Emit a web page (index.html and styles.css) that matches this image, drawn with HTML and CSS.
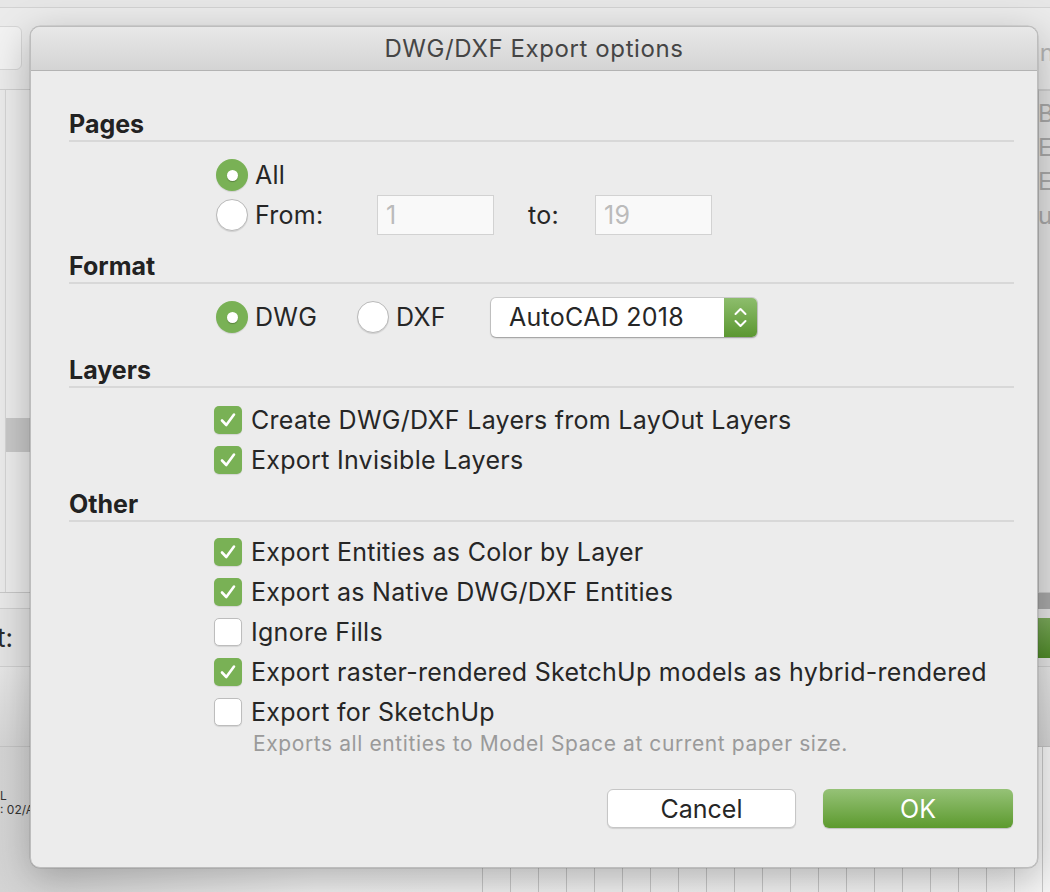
FILE: index.html
```html
<!DOCTYPE html>
<html>
<head>
<meta charset="utf-8">
<title>DWG/DXF Export options</title>
<link rel="stylesheet" href="styles.css">
</head>
<body>
<div class="app">
  <div class="topstrip"></div>
  <div class="toolbar">
    <div class="tb-btn"></div>
    <span class="tb-letter">n</span>
  </div>
  <div class="main">
    <div class="side-left"><div class="sel"></div></div>
    <div class="side-right">
      <span>B</span><span>E</span><span>E</span><span>ul</span>
    </div>
  </div>
  <div class="barrow">
    <div class="bar-left"></div>
    <div class="bar-right"></div>
  </div>
  <div class="fieldrow">
    <span class="big-t">t:</span>
    <div class="green-right"></div>
  </div>
  <div class="panelrow"></div>
  <div class="drawing">
    <div class="draw-text"><span>L</span><span>: 02/A-</span></div>
  </div>
</div>

<div class="dialog">
  <div class="titlebar">DWG/DXF Export options</div>
  <div class="body">
    <section class="sec sec-pages">
      <h2 class="head">Pages</h2>
      <div class="opts">
        <div class="row"><span class="radio on"></span><span class="rlbl">All</span></div>
        <div class="row">
          <span class="radio"></span><span class="rlbl w-from">From:</span>
          <span class="field">1</span>
          <span class="lbl w-to">to:</span>
          <span class="field">19</span>
        </div>
      </div>
    </section>

    <section class="sec sec-format">
      <h2 class="head">Format</h2>
      <div class="opts">
        <div class="row">
          <span class="radio on"></span><span class="rlbl w-dwg">DWG</span>
          <span class="radio"></span><span class="rlbl w-dxf">DXF</span>
          <div class="select">
            <span class="sel-text">AutoCAD 2018</span>
            <span class="stepper">
              <svg width="33" height="39" viewBox="0 0 33 39"><path d="M11.5 16 L16.5 11 L21.5 16" fill="none" stroke="#fff" stroke-width="2" stroke-linecap="round" stroke-linejoin="round"/><path d="M11.5 23 L16.5 28 L21.5 23" fill="none" stroke="#fff" stroke-width="2" stroke-linecap="round" stroke-linejoin="round"/></svg>
            </span>
          </div>
        </div>
      </div>
    </section>

    <section class="sec sec-layers">
      <h2 class="head">Layers</h2>
      <div class="opts">
        <div class="row"><span class="check on"><svg width="28" height="28" viewBox="0 0 28 28"><path d="M8 14.5 L12.3 19 L20 8.5" fill="none" stroke="#fff" stroke-width="2.6" stroke-linecap="round" stroke-linejoin="round"/></svg></span><span class="clbl">Create DWG/DXF Layers from LayOut Layers</span></div>
        <div class="row"><span class="check on"><svg width="28" height="28" viewBox="0 0 28 28"><path d="M8 14.5 L12.3 19 L20 8.5" fill="none" stroke="#fff" stroke-width="2.6" stroke-linecap="round" stroke-linejoin="round"/></svg></span><span class="clbl">Export Invisible Layers</span></div>
      </div>
    </section>

    <section class="sec sec-other">
      <h2 class="head">Other</h2>
      <div class="opts">
        <div class="row"><span class="check on"><svg width="28" height="28" viewBox="0 0 28 28"><path d="M8 14.5 L12.3 19 L20 8.5" fill="none" stroke="#fff" stroke-width="2.6" stroke-linecap="round" stroke-linejoin="round"/></svg></span><span class="clbl">Export Entities as Color by Layer</span></div>
        <div class="row"><span class="check on"><svg width="28" height="28" viewBox="0 0 28 28"><path d="M8 14.5 L12.3 19 L20 8.5" fill="none" stroke="#fff" stroke-width="2.6" stroke-linecap="round" stroke-linejoin="round"/></svg></span><span class="clbl">Export as Native DWG/DXF Entities</span></div>
        <div class="row"><span class="check"></span><span class="clbl">Ignore Fills</span></div>
        <div class="row"><span class="check on"><svg width="28" height="28" viewBox="0 0 28 28"><path d="M8 14.5 L12.3 19 L20 8.5" fill="none" stroke="#fff" stroke-width="2.6" stroke-linecap="round" stroke-linejoin="round"/></svg></span><span class="clbl">Export raster-rendered SketchUp models as hybrid-rendered</span></div>
        <div class="row"><span class="check"></span><span class="clbl">Export for SketchUp</span></div>
        <div class="note">Exports all entities to Model Space at current paper size.</div>
      </div>
    </section>

    <div class="buttons">
      <button class="btn cancel">Cancel</button>
      <button class="btn ok">OK</button>
    </div>
  </div>
</div>
</body>
</html>
```

FILE: styles.css
```css
* { box-sizing: border-box; }
html, body { margin: 0; padding: 0; }
body {
  width: 1050px;
  height: 892px;
  overflow: hidden;
  position: relative;
  background: #ebebeb;
  font-family: Inter, "Liberation Sans", sans-serif;
  color: #262626;
}

/* ---------- background application ---------- */
.app { display: flex; flex-direction: column; height: 892px; }
.topstrip { height: 8px; background: #e6e6e6; border-bottom: 1px solid #d2d2d2; }
.toolbar {
  height: 82px;
  display: flex;
  justify-content: space-between;
  align-items: flex-start;
  background: #ebebeb;
  border-bottom: 1px solid #d0d0d0;
}
.tb-btn {
  margin-top: 18px;
  margin-left: -12px;
  width: 34px;
  height: 44px;
  border-radius: 6px;
  background: #f2f2f2;
  border: 1px solid #d6d6d6;
}
.tb-letter { margin-top: 30px; margin-right: -4px; font-size: 24px; color: #b5b5b5; }
.main {
  height: 502px;
  display: flex;
  justify-content: space-between;
}
.side-left {
  width: 30px;
  margin-left: 5px;
  border-left: 1px solid #d4d4d4;
  background: #ededed;
  padding-top: 328px;
}
.sel { height: 34px; background: #c9c9c9; }
.side-right {
  width: 12px;
  background: #e2e2e2;
  border-left: 1px solid #c6c6c6;
  border-top: 1px solid #cfcfcf;
  display: flex;
  flex-direction: column;
  padding-top: 6px;
  font-size: 24px;
  color: #a9a9a9;
  line-height: 34px;
  overflow: hidden;
}
.side-right span { margin-left: -1px; white-space: nowrap; }
.barrow { height: 17px; display: flex; justify-content: space-between; border-top: 1px solid #c8c8c8; }
.bar-left { width: 30px; border-bottom: 1px solid #cfcfcf; background: #e9e9e9; }
.bar-right { width: 12px; background: #a8a8a8; }
.fieldrow {
  height: 58px;
  display: flex;
  justify-content: space-between;
  align-items: center;
  background: #e4e4e4;
  border-bottom: 1px solid #cfcfcf;
}
.big-t { font-size: 26px; color: #2a2a2a; margin-left: -3px; }
.green-right { width: 12px; height: 40px; background: linear-gradient(#7aa85a, #4f8a28); }
.panelrow { height: 80px; background: linear-gradient(#e6e6e6, #d5d5d5); border-bottom: 1px solid #c4c4c4; }
.drawing {
  flex: 1;
  background:
    repeating-linear-gradient(90deg, #c9c9c9 0 1px, transparent 1px 28px) 482px 0 / 600px 100% no-repeat,
    linear-gradient(90deg, #d4d4d4, #f2f2f2 30%, #f7f7f7);
  padding-top: 42px;
}
.draw-text { display: flex; flex-direction: column; font-size: 12px; color: #333; line-height: 14px; }

/* ---------- dialog ---------- */
.dialog {
  position: absolute;
  left: 30px;
  top: 26px;
  width: 1008px;
  height: 842px;
  background: #ececec;
  border-radius: 10px;
  border: 1px solid #bdbdbd;
  box-shadow: 0 12px 40px rgba(0,0,0,0.28), 0 0 0 0.5px rgba(0,0,0,0.15);
  overflow: hidden;
}
.titlebar {
  height: 44px;
  background: linear-gradient(#e8e8e8, #d4d4d4);
  border-bottom: 1px solid #b3b3b3;
  text-align: center;
  font-size: 24px;
  letter-spacing: 0.6px;
  line-height: 43px;
  color: #454545;
}
.body { padding: 38px 23px 0 38px; }

.head {
  margin: 0;
  font-size: 25px;
  font-weight: 700;
  line-height: 30px;
  padding-bottom: 1px;
  border-bottom: 2px solid #d8d8d8;
  color: #222;
}
.sec-format { margin-top: 16px; }
.sec-layers { margin-top: 18px; }
.sec-other { margin-top: 9px; }
.opts { padding-left: 147px; margin-top: 13px; display: flex; flex-direction: column; }
.sec-layers .opts { margin-top: 12px; }
.sec-other .opts { margin-top: 10px; }
.row { height: 40px; display: flex; align-items: center; font-size: 25px; letter-spacing: 0.28px; }

.radio {
  width: 32px; height: 32px;
  border-radius: 50%;
  background: #fff;
  border: 1px solid #b9b9b9;
  box-shadow: 0 1px 1px rgba(0,0,0,0.12);
  flex: none;
  display: flex; align-items: center; justify-content: center;
}
.radio.on { background: #79b155; border: none; }
.radio.on::after {
  content: "";
  width: 11px; height: 11px;
  border-radius: 50%;
  background: #fff;
  box-shadow: 0 1px 1px rgba(0,0,0,0.25);
}
.rlbl { margin-left: 7px; }
.w-from { width: 122px; }
.w-dwg { width: 102px; }
.w-dxf { width: 95px; }
.lbl.w-to { margin-left: 34px; width: 67px; }
.field {
  width: 117px; height: 40px;
  background: #f9f9f9;
  border: 1px solid #d2d2d2;
  color: #bbbbbb;
  padding-left: 8px;
  line-height: 38px;
}

.select {
  width: 266px; height: 39px;
  background: #fff;
  border-radius: 5px;
  box-shadow: 0 0 0 1px rgba(0,0,0,0.13), 0 1px 2px rgba(0,0,0,0.25);
  display: flex; align-items: center; justify-content: space-between;
}
.sel-text { padding-left: 18px; }
.stepper {
  width: 33px; height: 39px;
  background: linear-gradient(#8dbd6c, #5b9731);
  border-radius: 0 5px 5px 0;
  display: flex;
}

.check {
  width: 28px; height: 28px;
  margin-left: -2px;
  border-radius: 5px;
  background: #fff;
  border: 1px solid #bdbdbd;
  box-shadow: 0 1px 1px rgba(0,0,0,0.1);
  flex: none;
  display: flex;
}
.check.on { background: #79b155; border: none; }
.clbl { margin-left: 9px; white-space: nowrap; }
.note { margin-left: 37px; font-size: 21px; letter-spacing: 0.6px; line-height: 24px; color: #9a9a9a; }

.buttons { margin-top: 33px; display: flex; justify-content: flex-end; gap: 27px; padding-right: 1px; }
.btn {
  height: 39px;
  border-radius: 6px;
  font-family: inherit;
  font-size: 25px;
  padding: 0;
}
.cancel {
  width: 189px;
  background: #fff;
  border: 1px solid #c6c6c6;
  box-shadow: 0 1px 1px rgba(0,0,0,0.12);
  color: #262626;
}
.ok {
  width: 190px;
  background: linear-gradient(#96c277, #5c9a2e);
  border: none;
  box-shadow: 0 1px 1px rgba(0,0,0,0.18);
  color: #fff;
}
```
